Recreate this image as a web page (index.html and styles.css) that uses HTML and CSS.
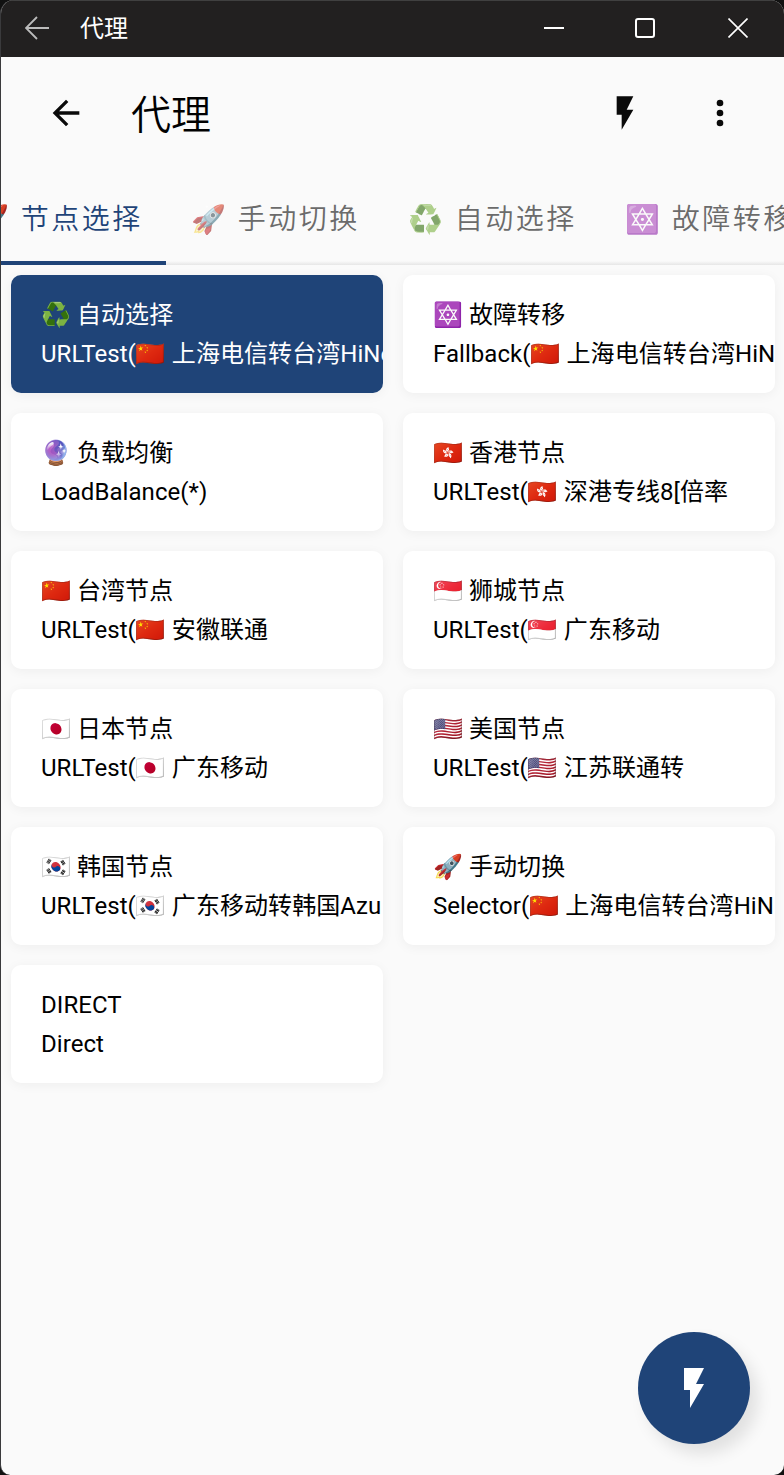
FILE: index.html
```html
<!DOCTYPE html>
<html lang="zh-CN">
    <head>
        <meta charset="utf-8">
        <title>代理</title>
        <link rel="stylesheet" href="styles.css">
    </head>
    <body>
        <div class="window">
            <div class="titlebar">
                <svg class="titlebar-back" width="24" height="24" viewBox="0 0 24 24"><path d="M24 12H1M12 1L1 12L12 23"/></svg>
                <span class="titlebar-text">代理</span>
                <div class="controls">
                    <svg width="20" height="20" viewBox="0 0 20 20"><path d="M0 10H20"/></svg>
                    <svg width="20" height="20" viewBox="0 0 20 20"><rect x="1" y="1" width="18" height="18" rx="2"/></svg>
                    <svg class="thin" width="20" height="20" viewBox="0 0 20 20"><path d="M0.5 0.5L19.5 19.5M19.5 0.5L0.5 19.5"/></svg>
                </div>
            </div>
            <div class="toolbar">
                <svg class="back" width="40" height="40" viewBox="0 0 24 24"><path d="M20 11H7.83l5.59-5.59L12 4l-8 8 8 8 1.41-1.41L7.83 13H20v-2z"/></svg>
                <h1 class="title">代理</h1>
                <svg class="bolt" width="40" height="40" viewBox="0 0 24 24"><path d="M7 2v11h3v9l7-12h-4l4-8z"/></svg>
                <svg class="more" width="40" height="40" viewBox="0 0 24 24"><circle cx="12" cy="6" r="2"/><circle cx="12" cy="12" r="2"/><circle cx="12" cy="18" r="2"/></svg>
            </div>
            <div class="tabs">
                <div class="tab active"><span class="emoji">🚀</span> 节点选择</div>
                <div class="tab"><span class="emoji">🚀</span> 手动切换</div>
                <div class="tab"><span class="emoji">♻️</span> 自动选择</div>
                <div class="tab"><span class="emoji">🔯</span> 故障转移</div>
            </div>
            <div class="grid">
                <div class="card selected">
                    <div>♻️ 自动选择</div>
                    <div>URLTest(🇨🇳 上海电信转台湾HiNet</div>
                </div>
                <div class="card">
                    <div>🔯 故障转移</div>
                    <div>Fallback(🇨🇳 上海电信转台湾HiN</div>
                </div>
                <div class="card">
                    <div>🔮 负载均衡</div>
                    <div>LoadBalance(*)</div>
                </div>
                <div class="card">
                    <div>🇭🇰 香港节点</div>
                    <div>URLTest(🇭🇰 深港专线8[倍率</div>
                </div>
                <div class="card">
                    <div>🇨🇳 台湾节点</div>
                    <div>URLTest(🇨🇳 安徽联通</div>
                </div>
                <div class="card">
                    <div>🇸🇬 狮城节点</div>
                    <div>URLTest(🇸🇬 广东移动</div>
                </div>
                <div class="card">
                    <div>🇯🇵 日本节点</div>
                    <div>URLTest(🇯🇵 广东移动</div>
                </div>
                <div class="card">
                    <div>🇺🇸 美国节点</div>
                    <div>URLTest(🇺🇸 江苏联通转</div>
                </div>
                <div class="card">
                    <div>🇰🇷 韩国节点</div>
                    <div>URLTest(🇰🇷 广东移动转韩国Azu</div>
                </div>
                <div class="card">
                    <div>🚀 手动切换</div>
                    <div>Selector(🇨🇳 上海电信转台湾HiN</div>
                </div>
                <div class="card">
                    <div>DIRECT</div>
                    <div>Direct</div>
                </div>
            </div>
            <div class="fab">
                <svg width="48" height="48" viewBox="0 0 24 24"><path d="M7 2v11h3v9l7-12h-4l4-8z"/></svg>
            </div>
        </div>
    </body>
</html>
```
FILE: styles.css
```css
body {
    margin: 0;
    background-color: #111;
    font-family: Roboto, "Noto Sans CJK SC", "Noto Color Emoji", sans-serif;
    color: #000;
}
.window {
    position: relative;
    box-sizing: border-box;
    height: 1475px;
    border-left: 1px solid #3a3a3c;
    border-radius: 14px 14px 10px 10px;
    overflow: hidden;
    background-color: #fafafa;
}
.titlebar {
    box-sizing: border-box;
    display: flex;
    align-items: center;
    height: 57px;
    padding: 0 36px 2px 24px;
    border-top: 1px solid #404040;
    background-color: #222020;
    color: #fff;
}
.titlebar svg {
    fill: none;
    stroke: #fff;
    stroke-width: 2;
}
.titlebar .titlebar-back {
    stroke: #bbb;
    stroke-width: 1.8;
}
.titlebar-text {
    margin-left: 31px;
    font-size: 24px;
    font-weight: 400;
    line-height: 54px;
    padding-top: 2px;
}
.controls {
    display: flex;
    gap: 71px;
    margin-left: auto;
}
.controls .thin {
    margin-left: 2px;
    stroke-width: 1.6;
}
.toolbar {
    display: flex;
    align-items: center;
    height: 112px;
    padding: 0 44px 0 45px;
}
.toolbar svg {
    fill: #0a0a0a;
}
.title {
    flex: 1;
    margin: 0 0 0 45px;
    padding-top: 5px;
    font-size: 40px;
    font-weight: 350;
    line-height: 60px;
}
.more {
    margin-left: 55px;
}
.tabs {
    display: flex;
    height: 96px;
    background: linear-gradient(#fafafa, #e6e6e6) left bottom / 100% 4px no-repeat;
    overflow: hidden;
}
.tab {
    box-sizing: border-box;
    flex: 0 0 217px;
    height: 96px;
    padding: 0 0 0 25px;
    color: #6b6b6b;
    font-size: 28px;
    font-weight: 350;
    letter-spacing: 2.5px;
    line-height: 101px;
    white-space: nowrap;
}
.tab .emoji {
    opacity: 0.6;
}
.tab.active {
    margin-left: -52px;
    border-bottom: 4px solid #1f4478;
    color: #1f4478;
}
.tab.active .emoji {
    opacity: 1;
}
.grid {
    display: grid;
    grid-template-columns: 372px 372px;
    gap: 20px;
    padding: 10px;
}
.card {
    box-sizing: border-box;
    height: 118px;
    padding: 21px 0 0 30px;
    border-radius: 10px;
    background-color: #fff;
    box-shadow: 0 2px 12px rgba(0, 0, 0, 0.05);
    font-size: 24px;
    letter-spacing: 0.06px;
    line-height: 39px;
    white-space: nowrap;
    overflow: hidden;
}
.card.selected {
    background-color: #1f4478;
    color: #fff;
}
.fab {
    position: absolute;
    right: 34px;
    bottom: 31px;
    display: flex;
    align-items: center;
    justify-content: center;
    width: 112px;
    height: 112px;
    border-radius: 50%;
    background-color: #1f4478;
    box-shadow: 8px 10px 16px rgba(0, 0, 0, 0.1);
}
.fab svg {
    fill: #fff;
}
```
